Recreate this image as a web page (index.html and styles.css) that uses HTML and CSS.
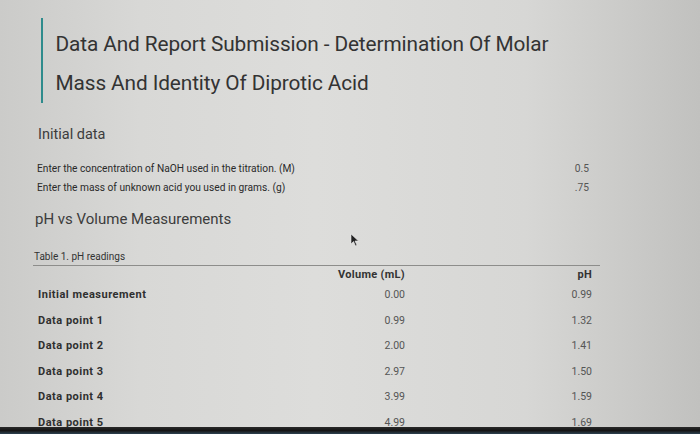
FILE: index.html
```html
<!DOCTYPE html>
<html>
<head>
<meta charset="utf-8">
<link rel="stylesheet" href="styles.css">
</head>
<body>
<div class="page">
  <header class="title">
    <h1>Data And Report Submission - Determination Of Molar<br>Mass And Identity Of Diprotic Acid</h1>
  </header>

  <h2 class="section initial">Initial data</h2>
  <div class="inputs">
    <div class="input-row"><span>Enter the concentration of NaOH used in the titration. (M)</span><span class="val">0.5</span></div>
    <div class="input-row"><span>Enter the mass of unknown acid you used in grams. (g)</span><span class="val">.75</span></div>
  </div>

  <h2 class="section ph">pH vs Volume Measurements</h2>

  <div class="table">
    <div class="caption">Table 1. pH readings</div>
    <div class="row head"><span></span><span class="num">Volume (mL)</span><span class="num">pH</span></div>
    <div class="row"><span class="lbl">Initial measurement</span><span class="num">0.00</span><span class="num">0.99</span></div>
    <div class="row"><span class="lbl">Data point 1</span><span class="num">0.99</span><span class="num">1.32</span></div>
    <div class="row"><span class="lbl">Data point 2</span><span class="num">2.00</span><span class="num">1.41</span></div>
    <div class="row"><span class="lbl">Data point 3</span><span class="num">2.97</span><span class="num">1.50</span></div>
    <div class="row"><span class="lbl">Data point 4</span><span class="num">3.99</span><span class="num">1.59</span></div>
    <div class="row"><span class="lbl">Data point 5</span><span class="num">4.99</span><span class="num">1.69</span></div>
  </div>

  <svg class="cursor" width="10" height="14" viewBox="0 0 10 14"><path d="M1 1 L1 11 L3.5 8.5 L5.5 13 L7 12.3 L5 8 L8.5 8 Z" fill="#222" stroke="#eee" stroke-width="0.6"/></svg>
  <div class="bezel"></div>
</div>
</body>
</html>
```

FILE: styles.css
```css
html, body {
  margin: 0;
  padding: 0;
}
body {
  width: 700px;
  height: 434px;
  overflow: hidden;
  font-family: Roboto, "Liberation Sans", sans-serif;
  color: #3a3a3a;
}
.page {
  position: relative;
  width: 700px;
  height: 434px;
  overflow: hidden;
  box-sizing: border-box;
  padding-top: 18px;
  background: linear-gradient(90deg, #cbcbc9 0%, #d8d8d6 20%, #dddddb 45%, #d7d7d5 75%, #c1c1bf 100%);
}
.title {
  margin-left: 41px;
  border-left: 2.5px solid #2e8b8c;
  padding: 7px 0 0 12.5px;
  height: 78px;
}
.title h1 {
  margin: 0;
  font-size: 20.8px;
  font-weight: 400;
  line-height: 39px;
  color: #333;
  letter-spacing: -0.1px;
}
.section {
  margin: 0;
  font-size: 14.5px;
  font-weight: 400;
  line-height: 20px;
  color: #3c3c3c;
}
.initial {
  margin-top: 22px;
  padding-left: 38px;
}
.inputs {
  margin-top: 14px;
  padding-left: 37px;
  width: 552px;
}
.input-row {
  display: flex;
  justify-content: space-between;
  font-size: 10.2px;
  line-height: 19px;
  color: #2a2a2a;
}
.input-row .val {
  color: #555;
}
.ph {
  margin-top: 12px;
  padding-left: 35px;
  font-size: 15px;
}
.table {
  margin-top: 21px;
  margin-left: 33px;
  width: 567px;
}
.caption {
  font-size: 10px;
  line-height: 14px;
  color: #333;
  padding-left: 1px;
  padding-bottom: 1px;
  border-bottom: 1px solid #8d8d8b;
}
.row {
  display: grid;
  grid-template-columns: 257px 110px 187px;
  padding: 0 8px 0 5px;
  height: 25.5px;
  align-items: center;
  font-size: 10.5px;
}
.row.head {
  height: 16px;
  font-weight: 700;
  font-size: 11px;
  letter-spacing: 0.3px;
  color: #333;
}
.row.head .num {
  color: #333;
}
.lbl {
  font-weight: 700;
  font-size: 11px;
  letter-spacing: 0.5px;
  color: #2f2f2f;
}
.num {
  text-align: right;
  color: #555;
}
.cursor {
  position: absolute;
  left: 350px;
  top: 233px;
}
.bezel {
  position: absolute;
  left: 0;
  bottom: 0;
  width: 700px;
  height: 7px;
  background: linear-gradient(180deg, #2a2a2a 0%, #151515 50%, #2d4150 100%);
}
```
